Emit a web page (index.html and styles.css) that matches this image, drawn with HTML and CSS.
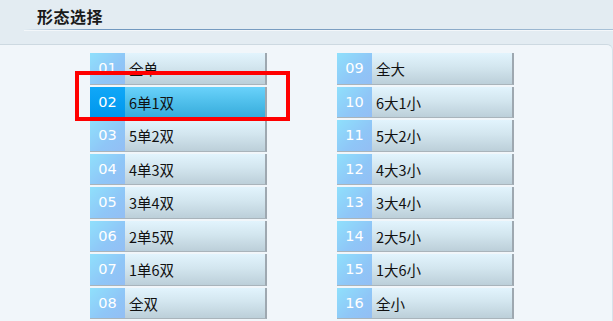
FILE: index.html
```html
<!DOCTYPE html>
<html lang="zh-CN">
  <head>
    <meta charset="UTF-8" />
    <meta name="viewport" content="width=device-width, initial-scale=1.0" />
    <title>形态选择</title>
    <link rel="stylesheet" href="styles.css">
  </head>
  <body>
    <!-- 标题栏 -->
    <div class="header">
      <h3>形态选择</h3>
      <div class="rule"></div>
    </div>

    <!-- 形态列表 -->
    <div class="panel">
      <div class="grid">
        <div class="col">
          <div class="item"><span class="num">01</span><span class="label">全单</span></div>
          <div class="item active"><span class="num">02</span><span class="label">6单1双</span></div>
          <div class="item"><span class="num">03</span><span class="label">5单2双</span></div>
          <div class="item"><span class="num">04</span><span class="label">4单3双</span></div>
          <div class="item"><span class="num">05</span><span class="label">3单4双</span></div>
          <div class="item"><span class="num">06</span><span class="label">2单5双</span></div>
          <div class="item"><span class="num">07</span><span class="label">1单6双</span></div>
          <div class="item"><span class="num">08</span><span class="label">全双</span></div>
        </div>
        <div class="col">
          <div class="item"><span class="num">09</span><span class="label">全大</span></div>
          <div class="item"><span class="num">10</span><span class="label">6大1小</span></div>
          <div class="item"><span class="num">11</span><span class="label">5大2小</span></div>
          <div class="item"><span class="num">12</span><span class="label">4大3小</span></div>
          <div class="item"><span class="num">13</span><span class="label">3大4小</span></div>
          <div class="item"><span class="num">14</span><span class="label">2大5小</span></div>
          <div class="item"><span class="num">15</span><span class="label">1大6小</span></div>
          <div class="item"><span class="num">16</span><span class="label">全小</span></div>
        </div>
      </div>

      <!-- 标注框 -->
      <div class="mark"></div>
    </div>
  </body>
</html>
```

FILE: styles.css
```css
/* 基本初始化 */
* {
  margin: 0;
  padding: 0;
  box-sizing: border-box;
}

body {
  width: 613px;
  height: 321px;
  overflow: hidden;
  background-color: #e3ecf2;
  font-family: "Noto Sans CJK SC", "DejaVu Sans", sans-serif;
  color: #111;
}

/* 标题栏 */
.header {
  height: 44px;
  padding-top: 6px;
  background-color: #e3ecf2;
}

.header h3 {
  padding-left: 37px;
  font-size: 16px;
  line-height: 20px;
  font-weight: bold;
  letter-spacing: 0.5px;
  color: #1a1a1a;
}

.rule {
  height: 2px;
  margin: 3px 0 0 24px;
  background: linear-gradient(to right, rgba(110, 150, 190, 0) 0%, #6f97bf 12%, #7d9fc2 60%, #a9c2d8 100%);
  border-bottom: 1px solid #f3f7fa;
}

/* 列表面板 */
.panel {
  position: relative;
  height: 277px;
  background-color: #f1f6fa;
  border-top: 1px solid #cdd9e1;
  border-right: 1px solid #d8e2ea;
  border-top-right-radius: 6px;
}

.grid {
  display: flex;
  gap: 70px;
  padding: 8px 0 0 90px;
}

.col {
  display: flex;
  flex-direction: column;
  gap: 2px;
  width: 177px;
}

.item {
  display: flex;
  height: 31.5px;
  border-right: 2px solid #9ea8b0;
  border-bottom: 1px solid #a9b4bb;
  background: linear-gradient(to bottom, #e2f4fd 0%, #d3e6ef 45%, #bccfd9 100%);
}

.num {
  width: 35px;
  text-align: center;
  font-family: "DejaVu Sans", sans-serif;
  font-size: 14.5px;
  line-height: 31px;
  color: #fff;
  background: linear-gradient(135deg, #8fe0fc 0%, #8fc6f7 60%, #93bef4 100%);
}

.label {
  padding-left: 4px;
  font-size: 14.5px;
  line-height: 31px;
  color: #111;
}

.item.active {
  background: linear-gradient(to bottom, #6ad2fb 0%, #4fbfeb 50%, #38acdb 100%);
}

.item.active .num {
  background: linear-gradient(to bottom, #10a8f8 0%, #0096ec 100%);
}

/* 红色标注框 */
.mark {
  position: absolute;
  left: 75px;
  top: 26px;
  width: 215px;
  height: 50px;
  border: 4px solid #ff0000;
}
```
